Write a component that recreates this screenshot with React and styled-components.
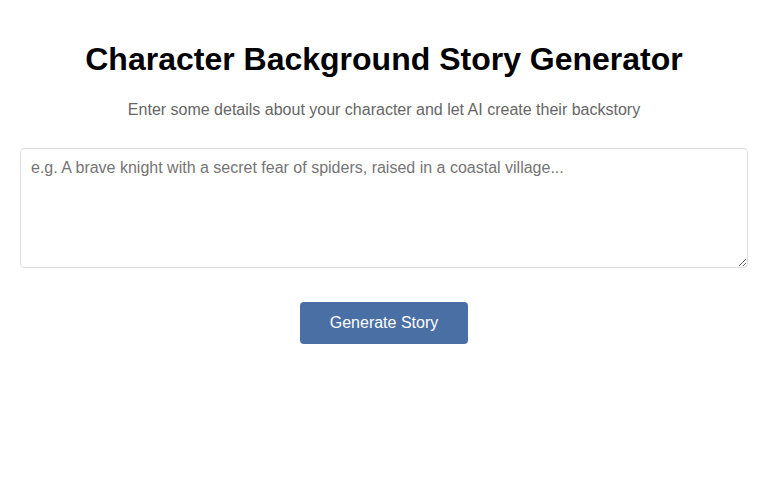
import styled, { createGlobalStyle } from "styled-components";

const GlobalStyle = createGlobalStyle`
  body {
    margin: 0;
    background: #fff;
    font-family: "Liberation Sans", Arial, sans-serif;
  }
`;

const Page = styled.div`
  max-width: 768px;
  margin: 0 auto;
  padding: 20px;
  box-sizing: border-box;
`;

const Title = styled.h1`
  font-size: 32px;
  font-weight: bold;
  color: #000;
  text-align: center;
  margin: 21px 0 23px;
`;

const Subtitle = styled.p`
  font-size: 16px;
  color: #666;
  text-align: center;
  margin: 0 0 29px;
`;

const StoryInput = styled.textarea`
  display: block;
  width: 100%;
  height: 120px;
  box-sizing: border-box;
  padding: 10px;
  border: 1px solid #ddd;
  border-radius: 4px;
  font-family: "Liberation Sans", Arial, sans-serif;
  font-size: 16px;
  color: #333;
  resize: vertical;
  outline: none;

  &::placeholder {
    color: #757575;
  }
`;

const Actions = styled.div`
  display: flex;
  justify-content: center;
  margin-top: 34px;
`;

const GenerateButton = styled.button`
  background: #4a6fa5;
  color: #fff;
  border: none;
  border-radius: 4px;
  padding: 12px 30px;
  font-family: "Liberation Sans", Arial, sans-serif;
  font-size: 16px;
  line-height: 18px;
  cursor: pointer;
`;

const App = () => (
  <>
    <GlobalStyle />
    <Page>
      <Title>Character Background Story Generator</Title>
      <Subtitle>
        Enter some details about your character and let AI create their backstory
      </Subtitle>
      <StoryInput placeholder="e.g. A brave knight with a secret fear of spiders, raised in a coastal village..." />
      <Actions>
        <GenerateButton>Generate Story</GenerateButton>
      </Actions>
    </Page>
  </>
);

export default App;
